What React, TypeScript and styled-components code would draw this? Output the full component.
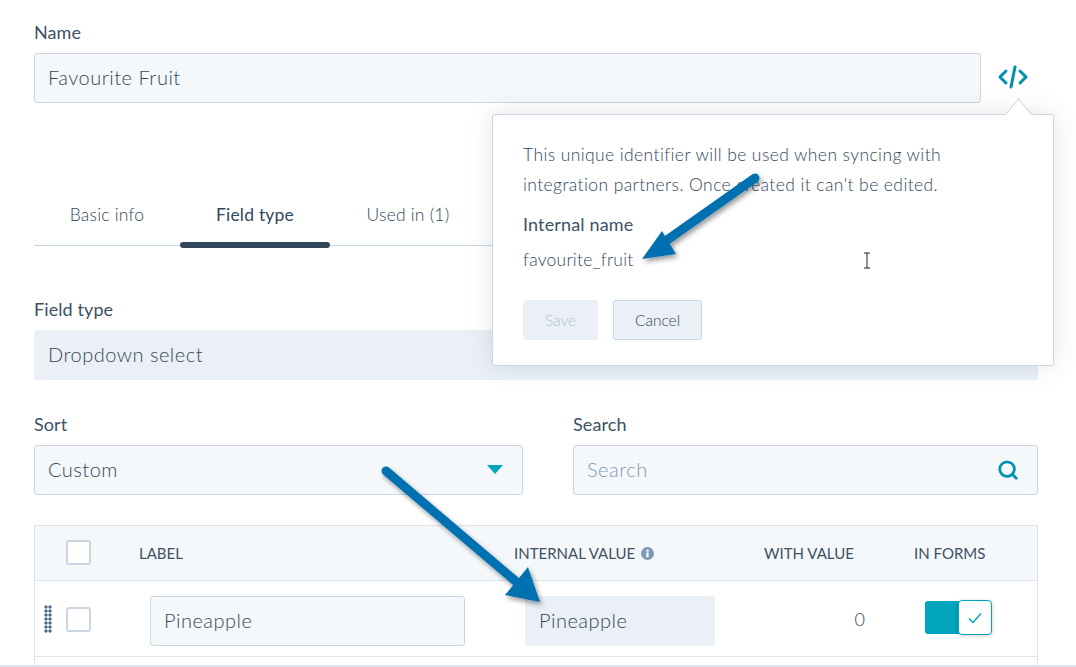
import React from "react";
import styled, { createGlobalStyle } from "styled-components";
import { Search as SearchIcon } from "lucide-react";

const Global = createGlobalStyle`
  html, body { margin: 0; padding: 0; background: #fff; }
  body { font-family: Lato, "Open Sans", sans-serif; color: #33475b; overflow: hidden; }
`;

const Page = styled.div`
  position: relative;
  width: 1076px;
  height: 667px;
  overflow: hidden;
  box-sizing: border-box;
  padding: 21px 38px 0 34px;
  border-bottom: 2px solid #dfe3eb;
`;

const Label = styled.div`
  font-size: 18px;
  line-height: 22px;
  letter-spacing: 0.1px;
  color: #3d5064;
  margin-bottom: 10px;
`;

const Field = styled.div<{ $disabled?: boolean }>`
  box-sizing: border-box;
  height: 50px;
  display: flex;
  align-items: center;
  justify-content: space-between;
  padding: 0 13px 2px;
  border-radius: 3px;
  font-size: 20px;
  font-weight: 300;
  letter-spacing: 0.5px;
  color: #33475b;
  background: ${(p) => (p.$disabled ? "#eaf0f6" : "#f5f8fa")};
  border: 1px solid ${(p) => (p.$disabled ? "#eaf0f6" : "#cbd6e2")};
`;

const NameRow = styled.div`
  display: flex;
  align-items: center;
  gap: 16px;
  & > ${Field} { flex: 1; }
  & > svg { margin: -2px 9px 0 0; }
`;

const Tabs = styled.div`
  display: flex;
  height: 69px;
  margin-top: 74px;
  border-bottom: 1px solid #cbd6e2;
  box-sizing: border-box;
  width: 480px;
`;

const Tab = styled.div<{ $active?: boolean; $w: number }>`
  position: relative;
  width: ${(p) => p.$w}px;
  text-align: center;
  font-size: 17.5px;
  line-height: 40px;
  letter-spacing: 0.2px;
  font-weight: 300;
  color: #33475b;
  padding-top: 18px;
  box-sizing: border-box;
  ${(p) => p.$active && "font-weight: 400;"}
  ${(p) =>
    p.$active &&
    `&::after { content: ""; position: absolute; left: 0; right: 0; bottom: -3px; height: 6px; border-radius: 3px; background: #33475b; }`}
`;

const TypeSection = styled.div`
  margin-top: 52px;
`;

const SortRow = styled.div`
  display: grid;
  grid-template-columns: 489px 465px;
  gap: 50px;
  margin-top: 33px;
`;

const Caret = styled.span`
  width: 0;
  height: 0;
  border-left: 8px solid transparent;
  border-right: 8px solid transparent;
  border-top: 9px solid #00a4bd;
  margin-right: 6px;
`;

const Placeholder = styled.span`
  color: #7c98b6;
`;

const Table = styled.div`
  margin-top: 30px;
  border: 1px solid #dfe3eb;
  border-bottom: none;
  height: 150px;
  box-sizing: border-box;
`;

const Grid = styled.div`
  display: grid;
  grid-template-columns: 31px 73px 375px 250px 150px 1fr;
  align-items: center;
`;

const Head = styled(Grid)`
  height: 55px;
  background: #f5f8fa;
  border-bottom: 1px solid #dfe3eb;
  box-sizing: border-box;
`;

const Row = styled(Grid)`
  height: 76px;
  border-bottom: 1px solid #dfe3eb;
  box-sizing: border-box;
`;

const HeadCell = styled.div`
  font-size: 15px;
  color: #3d5064;
  display: flex;
  align-items: center;
  gap: 6px;
  white-space: nowrap;
`;

const Check = styled.div<{ $top: number }>`
  width: 25px;
  height: 25px;
  box-sizing: border-box;
  border: 2px solid #cbd6e2;
  border-radius: 3px;
  background: #fff;
  margin-top: ${(p) => p.$top}px;
`;

const Grip = styled.div`
  width: 8px;
  height: 28px;
  margin-left: 9px;
  background-image: radial-gradient(#516f90 1.5px, transparent 1.7px);
  background-size: 4px 4px;
`;

const RowField = styled(Field)<{ $w: number }>`
  width: ${(p) => p.$w}px;
  margin: 4px 0 0 11px;
`;

const ZeroCell = styled.div`
  font-size: 18px;
  font-weight: 300;
  color: #33475b;
  text-align: right;
  padding-right: 49px;
`;

const Toggle = styled.div`
  position: relative;
  width: 60px;
  height: 33px;
  margin-left: 11px;
  margin-top: -2px;
  border-radius: 3px;
  background: #00a4bd;
`;

const Knob = styled.div`
  position: absolute;
  right: -7px;
  top: -1px;
  width: 34px;
  height: 35px;
  box-sizing: border-box;
  background: #fff;
  border: 1px solid #00a4bd;
  border-radius: 4px;
  box-shadow: 0 1px 4px rgba(0, 0, 0, 0.2);
  display: flex;
  align-items: center;
  justify-content: center;
`;

const Popover = styled.div`
  position: absolute;
  left: 492px;
  top: 114px;
  width: 562px;
  height: 252px;
  box-sizing: border-box;
  padding: 25px 30px;
  background: #fff;
  border: 1px solid #cbd6e2;
  border-radius: 3px;
  box-shadow: 0 0 24px rgba(45, 62, 80, 0.14);
  &::before {
    content: "";
    position: absolute;
    right: 24px;
    top: -11px;
    width: 20px;
    height: 20px;
    background: #fff;
    border-left: 1px solid #cbd6e2;
    border-top: 1px solid #cbd6e2;
    transform: rotate(45deg) skew(6deg, 6deg);
  }
`;

const PopText = styled.p`
  margin: 0;
  font-size: 17.5px;
  font-weight: 300;
  letter-spacing: 0.4px;
  line-height: 30px;
  color: #33475b;
  white-space: nowrap;
`;

const PopLabel = styled.div`
  font-size: 18px;
  line-height: 24px;
  letter-spacing: 0.15px;
  margin-top: 12px;
  color: #3d5064;
`;

const PopValue = styled.div`
  font-size: 17.5px;
  font-weight: 300;
  letter-spacing: 0.25px;
  line-height: 24px;
  margin-top: 12px;
  color: #33475b;
`;

const Buttons = styled.div`
  display: flex;
  gap: 15px;
  margin-top: 28px;
`;

const Button = styled.div<{ $disabled?: boolean }>`
  box-sizing: border-box;
  height: 40px;
  display: flex;
  align-items: center;
  justify-content: center;
  border-radius: 3px;
  font-size: 15.5px;
  font-weight: 300;
  width: ${(p) => (p.$disabled ? 75 : 89)}px;
  background: #eaf0f6;
  color: ${(p) => (p.$disabled ? "#b0c1d4" : "#33475b")};
  border: 1px solid ${(p) => (p.$disabled ? "#eaf0f6" : "#cbd6e2")};
`;

const SearchGlyph = styled(SearchIcon)`
  margin: 2px 5px 0 0;
`;

const Cursor = styled.svg`
  position: absolute;
  left: 862px;
  top: 252px;
`;

const Overlay = styled.svg`
  position: absolute;
  left: 0;
  top: 0;
  pointer-events: none;
`;

const CodeIcon = () => (
  <svg width="32" height="24" viewBox="0 0 32 24" fill="none" stroke="#0091ae" strokeWidth="3" strokeLinecap="round" strokeLinejoin="round">
    <path d="M9 6 L3 12 L9 18" />
    <path d="M23 6 L29 12 L23 18" />
    <path d="M18 2 L14 22" />
  </svg>
);

const Arrow = ({ d, head }: { d: string; head: string }) => (
  <g filter="url(#arrowShadow)">
    <path d={d} stroke="#0071b0" strokeWidth="9" strokeLinecap="round" fill="none" />
    <polygon points={head} fill="#0071b0" />
  </g>
);

export default function App() {
  return (
    <Page>
      <Global />
      <Label>Name</Label>
      <NameRow>
        <Field>Favourite Fruit</Field>
        <CodeIcon />
      </NameRow>

      <Tabs>
        <Tab $w={146}>Basic info</Tab>
        <Tab $w={150} $active>Field type</Tab>
        <Tab $w={156}>Used in (1)</Tab>
      </Tabs>

      <TypeSection>
        <Label>Field type</Label>
        <Field $disabled>Dropdown select</Field>
      </TypeSection>

      <SortRow>
        <div>
          <Label>Sort</Label>
          <Field>
            Custom
            <Caret />
          </Field>
        </div>
        <div>
          <Label>Search</Label>
          <Field>
            <Placeholder>Search</Placeholder>
            <SearchGlyph size={22} color="#0091ae" strokeWidth={3} />
          </Field>
        </div>
      </SortRow>

      <Table>
        <Head>
          <span />
          <Check $top={-1} />
          <HeadCell>LABEL</HeadCell>
          <HeadCell>
            INTERNAL VALUE
            <svg width="13" height="13" viewBox="0 0 13 13">
              <circle cx="6.5" cy="6.5" r="6.5" fill="#7c98b6" />
              <rect x="5.4" y="5.5" width="2.2" height="4.8" fill="#fff" />
              <rect x="5.4" y="2.6" width="2.2" height="2" fill="#fff" />
            </svg>
          </HeadCell>
          <HeadCell>WITH VALUE</HeadCell>
          <HeadCell>IN FORMS</HeadCell>
        </Head>
        <Row>
          <Grip />
          <Check $top={1} />
          <RowField $w={315}>Pineapple</RowField>
          <RowField $w={190} $disabled>Pineapple</RowField>
          <ZeroCell>0</ZeroCell>
          <Toggle>
            <Knob>
              <svg width="14" height="12" viewBox="0 0 14 12" fill="none" stroke="#00a4bd" strokeWidth="1.4">
                <path d="M1 6.5 L5 10.5 L13 1.5" />
              </svg>
            </Knob>
          </Toggle>
        </Row>
      </Table>

      <Popover>
        <PopText>
          This unique identifier will be used when syncing with
          <br />
          integration partners. Once created it can't be edited.
        </PopText>
        <PopLabel>Internal name</PopLabel>
        <PopValue>favourite_fruit</PopValue>
        <Buttons>
          <Button $disabled>Save</Button>
          <Button>Cancel</Button>
        </Buttons>
      </Popover>

      <Cursor width="10" height="18" viewBox="0 0 10 18" fill="none" stroke="#222" strokeWidth="1">
        <path d="M2 1 H8 M2 16 H8 M5 1 V16" />
      </Cursor>

      <Overlay width="1076" height="667" viewBox="0 0 1076 667">
        <defs>
          <filter id="arrowShadow" x="-20%" y="-20%" width="150%" height="150%">
            <feDropShadow dx="2" dy="3" stdDeviation="2.5" floodColor="#000" floodOpacity="0.4" />
          </filter>
        </defs>
        <Arrow d="M755 178 L660 245" head="642,259 662,231 676,254" />
        <Arrow d="M386 471 L520 585" head="540,602 505,595 528,567" />
      </Overlay>
    </Page>
  );
}
